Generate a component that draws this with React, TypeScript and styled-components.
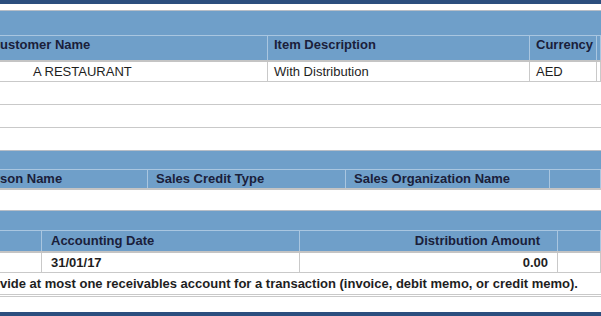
import React from "react";
import styled, { createGlobalStyle } from "styled-components";

const Global = createGlobalStyle`
  html, body { margin: 0; padding: 0; background: #ffffff; overflow: hidden; }
  body { font-family: "Liberation Sans", Arial, Helvetica, sans-serif; font-size: 13px; color: #222222; }
`;

const BLUE = "#6f9fc9";
const BLUE_LINE = "#a9c6e0";
const GRAY_LINE = "#c9c9c9";

const Page = styled.div`
  width: 601px;
  height: 316px;
  overflow: hidden;
  display: flex;
  flex-direction: column;
`;

const DarkBar = styled.div`
  flex: none;
  height: 4px;
  background: #2c4e7e;
`;

const BottomBar = styled(DarkBar)`
  margin-top: auto;
`;

const Section = styled.section<{ $top: number }>`
  flex: none;
  margin-top: ${(p) => p.$top}px;
  display: flex;
  flex-direction: column;
`;

const TitleBar = styled.div<{ $h: number }>`
  height: ${(p) => p.$h}px;
  background: ${BLUE};
  border-top: 1px solid #b7bec7;
  border-bottom: 1px solid ${BLUE_LINE};
`;

const Grid = styled.div<{ $cols: string; $h: number; $lh?: number }>`
  display: grid;
  grid-template-columns: ${(p) => p.$cols};
  height: ${(p) => p.$h}px;
  line-height: ${(p) => p.$lh ?? p.$h}px;
`;

const HeaderRow = styled(Grid)`
  background: ${BLUE};
  border-bottom: 2px solid #c4c4c4;
`;

const DataRow = styled(Grid)`
  background: #ffffff;
  border-bottom: 1px solid ${GRAY_LINE};
`;

type CellProps = { $pl?: number; $pr?: number; $indent?: number; $right?: boolean; $bold?: boolean };

const HeaderCell = styled.div<CellProps>`
  font-weight: bold;
  color: #1a203a;
  white-space: nowrap;
  overflow: hidden;
  padding: 0 ${(p) => p.$pr ?? 0}px 0 ${(p) => p.$pl ?? 0}px;
  text-indent: ${(p) => p.$indent ?? 0}px;
  text-align: ${(p) => (p.$right ? "right" : "left")};
  border-right: 1px solid ${BLUE_LINE};
`;

const Cell = styled.div<CellProps>`
  font-weight: ${(p) => (p.$bold ? "bold" : "normal")};
  color: #1e1e1e;
  white-space: nowrap;
  overflow: hidden;
  padding: 0 ${(p) => p.$pr ?? 0}px 0 ${(p) => p.$pl ?? 0}px;
  text-indent: ${(p) => p.$indent ?? 0}px;
  text-align: ${(p) => (p.$right ? "right" : "left")};
  border-right: 1px solid ${GRAY_LINE};
`;

const EmptyRow = styled.div`
  height: 22px;
  border-bottom: 1px solid ${GRAY_LINE};
`;

const MessageRow = styled.div`
  height: 21px;
  line-height: 21px;
  font-weight: bold;
  color: #1e1e1e;
  white-space: nowrap;
  overflow: hidden;
  text-indent: -21.7px;
  border-bottom: 3px double ${GRAY_LINE};
`;

const COLS1 = "268px 262px 67px 1fr";
const COLS2 = "148px 198px 204px 1fr";
const COLS3 = "42px 258px 258px 1fr";

export default function App() {
  return (
    <Page>
      <Global />
      <DarkBar />

      <Section $top={6}>
        <TitleBar $h={24} />
        <HeaderRow $cols={COLS1} $h={24} $lh={18}>
          <HeaderCell $indent={-9.4}>Customer Name</HeaderCell>
          <HeaderCell $pl={6}>Item Description</HeaderCell>
          <HeaderCell $pl={6}>Currency</HeaderCell>
          <HeaderCell />
        </HeaderRow>
        <DataRow $cols={COLS1} $h={19}>
          <Cell $pl={33}>A RESTAURANT</Cell>
          <Cell $pl={6}>With Distribution</Cell>
          <Cell $pl={6}>AED</Cell>
          <Cell />
        </DataRow>
        <EmptyRow />
        <EmptyRow />
      </Section>

      <Section $top={22}>
        <TitleBar $h={18} />
        <HeaderRow $cols={COLS2} $h={18}>
          <HeaderCell $indent={-54.2}>Salesperson Name</HeaderCell>
          <HeaderCell $pl={8}>Sales Credit Type</HeaderCell>
          <HeaderCell $pl={8}>Sales Organization Name</HeaderCell>
          <HeaderCell />
        </HeaderRow>
      </Section>

      <Section $top={20}>
        <TitleBar $h={19} />
        <HeaderRow $cols={COLS3} $h={20}>
          <HeaderCell />
          <HeaderCell $pl={9}>Accounting Date</HeaderCell>
          <HeaderCell $pr={17} $right>
            Distribution Amount
          </HeaderCell>
          <HeaderCell />
        </HeaderRow>
        <DataRow $cols={COLS3} $h={19}>
          <Cell />
          <Cell $pl={9} $bold>
            31/01/17
          </Cell>
          <Cell $pr={9} $right $bold>
            0.00
          </Cell>
          <Cell />
        </DataRow>
        <MessageRow>
          Provide at most one receivables account for a transaction (invoice, debit memo, or credit memo).
        </MessageRow>
      </Section>

      <BottomBar />
    </Page>
  );
}
